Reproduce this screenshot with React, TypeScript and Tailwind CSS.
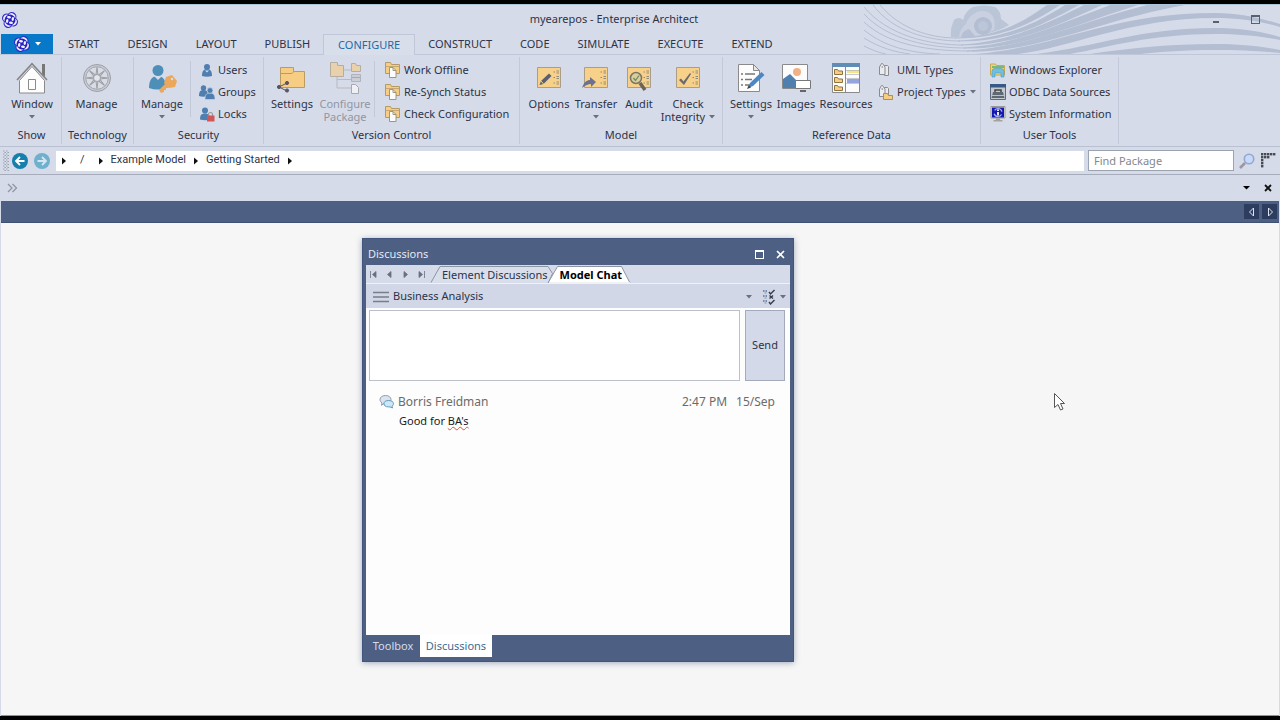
import React from "react";
import { clsx } from "clsx";

type IconProps = { className?: string };

const GOLD = "#f6cd82";
const GREY = "#8a8a8a";

/* ---------- Icons ---------- */

const LogoIcon = ({ className }: IconProps) => (
    <svg viewBox="0 0 18 18" className={clsx("h-[18px] w-[18px]", className)}>
        <g transform="rotate(28 9 9)">
            <g fill="#2f26c8">
                <circle cx="9" cy="5.200" r="4.600" />
                <circle cx="12.800" cy="9" r="4.600" />
                <circle cx="9" cy="12.800" r="4.600" />
                <circle cx="5.200" cy="9" r="4.600" />
            </g>
            <g fill="#e9ebff">
                <circle cx="9" cy="5.500" r="3.700" />
                <circle cx="12.500" cy="9" r="3.700" />
                <circle cx="9" cy="12.500" r="3.700" />
                <circle cx="5.500" cy="9" r="3.700" />
            </g>
            <circle cx="9" cy="9" r="5.400" fill="#2a20c0" />
            <g fill="#f1f2ff">
                <ellipse cx="6.800" cy="7" rx="2" ry="1.200" transform="rotate(-20 6.800 7)" />
                <ellipse cx="11" cy="6.800" rx="2" ry="1.200" transform="rotate(70 11 6.800)" />
                <ellipse cx="11.200" cy="11" rx="2" ry="1.200" transform="rotate(-20 11.200 11)" />
                <ellipse cx="7" cy="11.200" rx="2" ry="1.200" transform="rotate(70 7 11.200)" />
            </g>
        </g>
    </svg>
);

const Caret = ({ className }: IconProps) => (
    <svg viewBox="0 0 6 4" preserveAspectRatio="none" className={clsx("h-1 shrink-0", className ?? "w-1.5")}>
        <path d="M0 0h6L3 3.500z" fill="currentColor" />
    </svg>
);

const GreyCaret = ({ className }: IconProps) => <Caret className={clsx("w-1.5 text-[#6b7080]", className)} />;

const Big = ({ children }: { children: React.ReactNode }) => (
    <svg viewBox="0 0 32 32" className="h-8 w-8 shrink-0">
        {children}
    </svg>
);

const Small = ({ children }: { children: React.ReactNode }) => (
    <svg viewBox="0 0 16 16" className="h-4 w-4 shrink-0">
        {children}
    </svg>
);

const HouseIcon = () => (
    <Big>
        <path d="M26 2h3v13l-3-3z" fill="#777" />
        <path d="M3.500 18.500L16 4.500l12.500 14V31h-25z" fill="#fdfdfd" stroke={GREY} />
        <path d="M1 18L16 1.800 31 18" fill="none" stroke="#858585" strokeWidth="1.600" />
        <path d="M12.500 17.500h7v10h-7z" fill="none" stroke={GREY} />
    </Big>
);

const WheelIcon = () => (
    <Big>
        <circle cx="16" cy="16" r="13.500" fill="#c9ccd4" stroke="#9b9ea6" />
        <circle cx="16" cy="16" r="11.300" fill="#d9dce4" stroke="#a2a5ad" />
        {[0, 45, 90, 135, 180, 225, 270, 315].map((a) => (
            <path key={a} d="M15 13L16 5.500 17 13z" fill="none" stroke="#9c9fa6" transform={`rotate(${a} 16 16)`} />
        ))}
        <circle cx="16" cy="16" r="3.500" fill="#e4e6ec" stroke="#9c9fa6" />
    </Big>
);

const UserKeyIcon = () => (
    <Big>
        <path d="M3 26c0-8 3-12 8.500-12S20 18 20 26q-8.500 3-17 0z" fill="#4d8fb8" />
        <path d="M8 14l4 4 4-4z" fill="#d6dbe9" />
        <circle cx="12" cy="8.500" r="5.500" fill="#4d8fb8" />
        <g fill="#eba85a">
            <path d="M20 15l6-2 5 6-2 6-6 1-5-5z" />
            <path d="M21 20l-8 8 2 3 3-1v-2h2v-2h2l3-3z" />
        </g>
        <circle cx="26" cy="17" r="1.300" fill="#d6dbe9" />
    </Big>
);

const FolderShareIcon = () => (
    <Big>
        <path d="M4.500 25.500v-20h13v4h11v16z" fill={GOLD} stroke="#b99b66" />
        <path d="M5 11.500h11l2-2" fill="none" stroke="#b99b66" />
        <g fill="#5a5560" stroke="#5a5560">
            <path d="M3 25l8-4M3 25l8 4" />
            <circle cx="3" cy="25" r="1.600" />
            <circle cx="11" cy="21" r="1.600" />
            <circle cx="11" cy="28.500" r="1.600" />
        </g>
    </Big>
);

const ConfigPackageIcon = () => (
    <Big>
        <g opacity="0.6">
            <path d="M8 15v11h14M15 8h8M8 17.500h14" fill="none" stroke="#a5a5a5" />
            <path d="M1.500 14.500v-14h7v3h6v11zM22.500 9.500v-8h4l1 2h4v6z" fill={GOLD} stroke="#a09070" />
            <path d="M22.500 12.500h9v7h-9z" fill="#c4c7cf" stroke="#999" />
            <path d="M23 15.500h8" stroke="#888" />
            <path d="M22.500 22.500h4l3 3v6h-7z" fill="#fff" stroke="#888" />
        </g>
    </Big>
);

// Shared yellow panel of the "Model" group; the child draws the tool on top
const ModelIcon = ({ children }: { children: React.ReactNode }) => (
    <Big>
        <g transform="translate(0 -2)">
            <path d="M4.500 7.500h23v20h-23z" fill="#f7d08a" stroke="#ab9d86" />
            {[12, 17.5, 23].map((y) => (
                <path key={y} d={`M20.500 ${y}h1.500M23.500 ${y - 1}h2.500M23.500 ${y + 1}h2.500`} stroke="#8f897c" strokeWidth="1.200" />
            ))}
            {children}
        </g>
    </Big>
);

const OptionsIcon = () => (
    <ModelIcon>
        <path d="M6.500 25l1.500-4L16 13.500l2.500 2.500-8 8z" fill="#5b5f70" />
        <path d="M8 21l2.500 3" stroke="#f7d08a" />
    </ModelIcon>
);

const TransferIcon = () => (
    <ModelIcon>
        <path d="M2 28c2-6 5-8 8-8v-3l6 5-5 5v-3c-3 0-5 1-9 4z" fill="#6b7190" />
    </ModelIcon>
);

const AuditIcon = () => (
    <ModelIcon>
        <path d="M17 23l5 7" stroke="#6b6258" strokeWidth="3.500" />
        <circle cx="13" cy="18" r="5.500" fill="#d9cf9d" stroke="#7b7466" strokeWidth="1.500" />
        <path d="M10.500 18l2 2.500 3.500-5" fill="none" stroke="#6f8a5a" strokeWidth="1.300" />
    </ModelIcon>
);

const IntegrityIcon = () => (
    <ModelIcon>
        <path d="M7 20l2-1.500 2.500 3L18 13l1 1-7 11z" fill="#6b6a70" />
    </ModelIcon>
);

const DocPencilIcon = () => (
    <Big>
        <g transform="translate(0 -2)">
            <path d="M3.500 4.500h15l6 6v21h-21z" fill="#fcfcfd" stroke={GREY} />
            <path d="M18.500 4.500v6h6z" fill="#e6e6e6" stroke={GREY} />
            <path d="M6 14h2M6 19.500h2M6 25h2M10 14h10M10 19.500h7M10 25h5" stroke="#777" strokeWidth="1.500" />
            <path d="M13 28l2-5L26.500 12l3 3L18 26z" fill="#4a87c4" />
            <path d="M12 29l1.800-4 2.200 2.400z" fill="#444" />
        </g>
    </Big>
);

const ImagesIcon = () => (
    <Big>
        <g transform="translate(0 -2)">
            <path d="M2.500 4.500h25v24h-25z" fill="#fcfcfd" stroke={GREY} />
            <circle cx="17" cy="12" r="4" fill="#f0b184" />
            <path d="M3 28V19l7-5 8 8v6z" fill="#4f7fae" />
            <path d="M15.500 20.500h15v8h-15z" fill="#fff" stroke="#777" />
            <path d="M20 30h6v2h-6z" fill="#666" />
        </g>
    </Big>
);

const ResourcesIcon = () => (
    <Big>
        <path d="M2.500 1.500h27v29h-27z" fill="#fcfcfd" stroke={GREY} />
        <path d="M2 1h28v4H2z" fill="#5f8db5" />
        <path d="M15.500 5v25" stroke={GREY} />
        {[7, 15, 23].map((y) => (
            <path key={y} d={`M4.500 ${y + 5}.500v-5h3l1 1.500h4v3.500z`} fill={GOLD} stroke="#8f7442" />
        ))}
        <path d="M17 8h12v3H17z" fill="#f3e58a" />
        <path d="M17 17h12v4H17z" fill="#94a5dd" />
        <path d="M16 8.500h13M16 12.500h13M16 16.500h13M16 21.500h13" stroke="#b0b3ba" strokeWidth="0.700" />
    </Big>
);

const UserIcon = () => (
    <Small>
        <path d="M3 14c0-4 1-7 5-7s5 3 5 7q-5 1.500-10 0z" fill="#4f7fb0" />
        <path d="M6 8.500l2 2 2-2z" fill="#d6dbe9" />
        <circle cx="8" cy="5" r="3" fill="#4f7fb0" />
    </Small>
);

const GroupsIcon = () => (
    <Small>
        <path d="M0 12c0-4 1-6 4.500-6S9 8 9 12q-5 1.500-9 0z" fill="#4f7fb0" />
        <circle cx="4.500" cy="4" r="2.700" fill="#4f7fb0" />
        <path d="M6 15.500c0-4 1-6.500 5-6.500s5 2.500 5 6.500z" fill="#4f7fb0" stroke="#d6dbe9" strokeWidth="0.600" />
        <circle cx="11" cy="6.500" r="2.900" fill="#4f7fb0" stroke="#d6dbe9" strokeWidth="0.600" />
    </Small>
);

const LocksIcon = () => (
    <Small>
        <path d="M1 13.500c0-4 1-6 5-6s5 2 5 6q-5 1.500-10 0z" fill="#4f7fb0" />
        <circle cx="6" cy="4.500" r="3" fill="#4f7fb0" />
        <path d="M9.500 10V8.500a2 2 0 014 0V10" fill="none" stroke="#999" strokeWidth="1.200" />
        <path d="M8 9.500h7.500v6H8z" fill="#d2555a" />
    </Small>
);

const FolderDocIcon = () => (
    <Small>
        <path d="M0.500 11.500v-11h5l1 2h8v9z" fill={GOLD} stroke="#b39a68" />
        <path d="M1 4.500h13" stroke="#b39a68" strokeWidth="0.700" />
        <path d="M4.500 5.500h3.500l3 3v7H4.500z" fill="#fdfdfb" stroke="#958c78" strokeWidth="0.900" />
        <path d="M8 5.500v3h3" fill="none" stroke="#958c78" strokeWidth="0.900" />
    </Small>
);

const TagsIcon = ({ locked }: { locked?: boolean }) => (
    <Small>
        <path d="M6.500 3.500h3l1 1v9h-4z" fill="#e8ebf3" stroke="#8b8b8b" />
        <path d="M1.500 5l2-3.500h1L7 5v7.500H1.500z" fill="#e8ebf3" stroke="#8b8b8b" />
        <circle cx="4.200" cy="5" r="0.700" fill="#777" />
        {locked && <path d="M5.500 15.500v-6h4l1 2h4v4z" fill={GOLD} stroke="#a8905f" />}
    </Small>
);

const ExplorerIcon = () => (
    <Small>
        <path d="M0.500 13V2h5l1 1.500h8V13z" fill="#f0d57a" stroke="#c7a850" />
        <path d="M2 5h12" stroke="#7ab873" strokeWidth="2" />
        <path d="M2 15V9.500a3 3 0 013-3h6a3 3 0 013 3V15h-3v-4H5v4z" fill="#6fbfe0" stroke="#4b9cc4" strokeWidth="0.600" />
    </Small>
);

const OdbcIcon = () => (
    <Small>
        <path d="M0.500 0.500h15v15h-15z" fill="#c3c8cf" stroke="#5d6b7c" />
        <path d="M0 0h16v3.500H0z" fill="#365a86" />
        <path d="M5 8V6h6v2" fill="none" stroke="#444" strokeWidth="1.500" />
        <path d="M1.500 14l1.500-6h10l1.500 6z" fill="#5e6a73" />
        <path d="M2 11.500h12" stroke="#b9c0c6" />
    </Small>
);

const SysInfoIcon = () => (
    <Small>
        <path d="M1 0.500h14v11.500H1z" fill="#e5e5e0" stroke="#999" />
        <path d="M2 1.500h12v10H2z" fill="#1519b0" />
        <circle cx="8" cy="6.500" r="4" fill="none" stroke="#a9b4f5" strokeWidth="1.200" strokeDasharray="9 3.500" strokeDashoffset="-2" />
        <path d="M8 3.500v1.500M8 6v3.500" stroke="#fff" strokeWidth="1.800" />
        <path d="M6 12.500h4v1.500h2.500v1.500h-9V14H6z" fill="#a4a49c" />
    </Small>
);

const ChatIcon = () => (
    <svg viewBox="0 0 16 16" className="h-4 w-4 shrink-0">
        <path d="M6.500 1.500c3.200 0 5.500 1.600 5.500 4s-2.300 4-5.500 4H5l-2.500 1.800.5-2.500C1.600 8 1 6.900 1 5.500c0-2.400 2.300-4 5.500-4z" fill="#dbe4ee" stroke="#8f9cab" />
        <path d="M9.500 6.500c2.900 0 5 1.200 5 3.200 0 1-.5 1.800-1.500 2.400l.5 1.900-2.500-1.100H9.500c-2.900 0-4.500-1.200-4.500-3.200s1.600-3.200 4.500-3.200z" fill="#cfe6f5" stroke="#5d9cc4" />
    </svg>
);

const ChecklistIcon = () => (
    <svg viewBox="0 0 14 16" className="h-4 w-3.5">
        <path d="M1 2h5M1 7h5M1 12h5" stroke="#55749c" strokeWidth="1.500" strokeDasharray="1.500 1" />
        <path d="M2.500 4h2M2.500 9h2M2.500 14h2" stroke="#8a94a8" />
        <path d="M7 3l1.500 2L12.500 1M7 13l1.500 2 4-4M7.500 6.500l3.500 3M11 6.500l-3.500 3" fill="none" stroke="#333a48" strokeWidth="1.400" />
    </svg>
);

/* Decorative waves behind the right end of the title bar */
const TitleWaves = () => (
    <svg viewBox="860 5 420 49" className="pointer-events-none absolute top-0 right-0 h-[49px] w-[420px]">
        <path d="M951 37q-1-9 3-17 5-4 9 0 2-9 10-13 12-3 22 0 6 4 6 12l8 6q-22 13-58 12z" fill="#bac5d8" />
        <path d="M959 37q1-9 7-13 2-8 11-12 9-3 15 3 4 6 2 15-14 8-35 7z" fill="#c9d1e0" />
        <circle cx="983" cy="26" r="9" fill="#b3bed2" />
        <circle cx="983" cy="26" r="5" fill="#bcc6d8" />
        <path d="M961 37q1-6 8-8l7 8z" fill="#b5c0d4" />
        <g fill="none" stroke="#b4bfd2" strokeWidth="1">
            <path d="M880 5C900 29 930 38 956 38" />
            <path d="M873 5C893 32 930 41 960 41" />
            <path d="M864 7C888 36 930 45 963 45" />
            <path d="M864 14C888 40 930 48 966 48" />
            <path d="M864 22C888 45 930 51 969 51" />
            <path d="M864 30C885 47 910 53 940 54" />
            <path d="M864 38C880 48 895 52 910 54" />
            <path d="M864 46C872 50 880 53 886 54" />
        </g>
        <g fill="#b3bed2">
            <path d="M955 37.500C1000 37 1024 21 1047 5h13C1030 24 1004 38.500 955 38.500z" />
            <path d="M958 40.500C1006 39 1038 22 1065 5h14C1042 25 1012 41.500 958 41.500z" />
            <path d="M961 44.500C1010 42 1048 23 1084 5h18C1056 26 1014 46 961 45.500z" />
            <path d="M964 47.500C1014 45 1060 24 1110 5h28C1074 25 1020 50 964 48.500z" />
            <path d="M967 50.500C1024 48 1080 22 1147 5h38C1100 20 1034 54 967 51.500z" />
            <path d="M975 54C1060 47 1110 13 1215 13c25 0 45 5 65 11v3c-20-6-40-9-65-9C1130 18 1070 48 1018 54z" />
            <path d="M1036 54C1100 46 1140 28 1215 28c25 0 45 3 65 9v3c-20-4-40-6-65-6C1150 34 1110 47 1070 54z" />
            <path d="M1090 54C1130 48 1170 44 1215 44c25 0 45 2 65 6v3c-20-2-40-3-65-3-30 0-55 2-75 4z" />
        </g>
    </svg>
);

/* ---------- Ribbon ---------- */

const TABS = ["START", "DESIGN", "LAYOUT", "PUBLISH", "CONFIGURE", "CONSTRUCT", "CODE", "SIMULATE", "EXECUTE", "EXTEND"];

interface RibbonGroupProps {
    title: string;
    className: string;
    children: React.ReactNode;
}

const RibbonGroup = ({ title, className, children }: RibbonGroupProps) => (
    <section className={clsx("my-0.5 flex shrink-0 flex-col border-r border-[#c3c9d9]", className)}>
        <div className="flex h-[70px] items-start">{children}</div>
        <h2 className="text-center leading-4">{title}</h2>
    </section>
);

interface BigButtonProps {
    icon: React.ReactNode;
    label: string;
    second?: string;
    menu?: boolean;
    disabled?: boolean;
    className: string;
}

const BigButton = ({ icon, label, second, menu, disabled, className }: BigButtonProps) => (
    <button
        type="button"
        disabled={disabled}
        className={clsx(
            "flex shrink-0 flex-col items-center pt-[5px] leading-[13px] whitespace-nowrap",
            disabled && "text-[#9196a3]",
            className,
        )}
    >
        {icon}
        <span className="mt-[3px]">{label}</span>
        {second && (
            <span className="flex items-center gap-1">
                {second}
                {menu && <GreyCaret />}
            </span>
        )}
        {menu && !second && <GreyCaret className="mt-[5px]" />}
    </button>
);

interface SmallButtonProps {
    icon: React.ReactNode;
    label: string;
    menu?: boolean;
}

const SmallButton = ({ icon, label, menu }: SmallButtonProps) => (
    <button type="button" className="flex h-[22px] items-center gap-[3px] whitespace-nowrap">
        {icon}
        <span>{label}</span>
        {menu && <GreyCaret className="ml-px" />}
    </button>
);

const Divider = () => <div className="mt-1 h-14 w-px bg-[#c3c9d9]" />;

const Ribbon = () => (
    <div className="flex h-[92px] shrink-0 overflow-hidden border-b border-[#b9c0d1] pl-0.5">
        <RibbonGroup title="Show" className="w-[60px]">
            <BigButton icon={<HouseIcon />} label="Window" menu className="w-[60px]" />
        </RibbonGroup>
        <RibbonGroup title="Technology" className="w-[72px]">
            <BigButton icon={<WheelIcon />} label="Manage" className="w-[69px]" />
        </RibbonGroup>
        <RibbonGroup title="Security" className="w-[130px]">
            <BigButton icon={<UserKeyIcon />} label="Manage" menu className="w-[56px]" />
            <Divider />
            <div className="ml-2 flex flex-col pt-0.5">
                <SmallButton icon={<UserIcon />} label="Users" />
                <SmallButton icon={<GroupsIcon />} label="Groups" />
                <SmallButton icon={<LocksIcon />} label="Locks" />
            </div>
        </RibbonGroup>
        <RibbonGroup title="Version Control" className="w-[256px]">
            <BigButton icon={<FolderShareIcon />} label="Settings" className="ml-1 w-12" />
            <BigButton icon={<ConfigPackageIcon />} label="Configure" second="Package" disabled className="w-[58px]" />
            <Divider />
            <div className="ml-2.5 flex flex-col pt-0.5">
                <SmallButton icon={<FolderDocIcon />} label="Work Offline" />
                <SmallButton icon={<FolderDocIcon />} label="Re-Synch Status" />
                <SmallButton icon={<FolderDocIcon />} label="Check Configuration" />
            </div>
        </RibbonGroup>
        <RibbonGroup title="Model" className="w-[203px]">
            <BigButton icon={<OptionsIcon />} label="Options" className="ml-[5px] w-12" />
            <BigButton icon={<TransferIcon />} label="Transfer" menu className="w-[46px]" />
            <BigButton icon={<AuditIcon />} label="Audit" className="w-10" />
            <BigButton icon={<IntegrityIcon />} label="Check" second="Integrity" menu className="w-[58px]" />
        </RibbonGroup>
        <RibbonGroup title="Reference Data" className="w-[258px]">
            <BigButton icon={<DocPencilIcon />} label="Settings" menu className="ml-1 w-12" />
            <BigButton icon={<ImagesIcon />} label="Images" className="w-[42px]" />
            <BigButton icon={<ResourcesIcon />} label="Resources" className="w-[58px]" />
            <div className="ml-[3px] flex flex-col pt-0.5">
                <SmallButton icon={<TagsIcon />} label="UML Types" />
                <SmallButton icon={<TagsIcon locked />} label="Project Types" menu />
            </div>
        </RibbonGroup>
        <RibbonGroup title="User Tools" className="w-[138px]">
            <div className="ml-[9px] flex flex-col pt-0.5">
                <SmallButton icon={<ExplorerIcon />} label="Windows Explorer" />
                <SmallButton icon={<OdbcIcon />} label="ODBC Data Sources" />
                <SmallButton icon={<SysInfoIcon />} label="System Information" />
            </div>
        </RibbonGroup>
    </div>
);

const Header = () => (
    <header className="relative flex shrink-0 flex-col border-t border-[#a9c6dd]">
        <TitleWaves />
        <div className="relative flex h-[29px] items-center px-px">
            <LogoIcon />
            <h1 className="flex-1 pr-[70px] text-center">myearepos - Enterprise Architect</h1>
            <div className="absolute right-[17px] flex items-center gap-[23px]">
                <button type="button" aria-label="Minimise" className="flex h-4 w-4 items-center justify-center">
                    <span className="mt-1 h-0.5 w-1.5 bg-[#5b6070]" />
                </button>
                <button type="button" aria-label="Maximise" className="flex h-4 w-4 items-center justify-center">
                    <span className="h-[9px] w-[9px] border border-t-2 border-[#5b6070]" />
                </button>
            </div>
        </div>
        <nav className="relative flex h-[21px] items-stretch border-b border-[#c0c7d8]">
            <button
                type="button"
                aria-label="Application menu"
                className="mr-px ml-px flex w-[52px] items-center justify-center gap-1 bg-[#0878c8] text-white"
            >
                <LogoIcon className="h-4 w-4" />
                <Caret />
            </button>
            {TABS.map((tab) => (
                <button
                    key={tab}
                    type="button"
                    className={clsx(
                        "px-3.5",
                        tab === "CONFIGURE" && "-mx-px -mb-px border border-b-0 border-[#c0c7d8] bg-[#d9deeb] text-[#1f6aa5]",
                    )}
                >
                    {tab}
                </button>
            ))}
        </nav>
    </header>
);

/* ---------- Navigation bar ---------- */

const Crumb = () => (
    <svg viewBox="0 0 4 8" className="h-2 w-1 shrink-0">
        <path d="M0 0.500L4 4 0 7.500z" fill="#111" />
    </svg>
);

const RoundArrow = ({ label, back }: { label: string; back?: boolean }) => (
    <button type="button" aria-label={label}>
        <svg viewBox="0 0 16 16" className="h-4 w-4">
            <circle cx="8" cy="8" r="8" fill={back ? "#167fab" : "#6fb0cf"} />
            <path
                d={back ? "M12.500 8H4.500M8 4L4 8l4 4" : "M3.500 8h8M8 4l4 4-4 4"}
                fill="none"
                stroke={back ? "#fff" : "#d5e6f0"}
                strokeWidth="1.800"
            />
        </svg>
    </button>
);

const NavigationBar = () => (
    <div className="flex h-7 shrink-0 items-center border-b border-[#a6acba] pr-[3px] pl-[3px]">
        <svg viewBox="0 0 6 22" className="mr-[3px] h-[22px] w-1.5">
            {[1, 4, 7, 10, 13, 16, 19].map((y) => (
                <path key={y} d={`M0 ${y}h1.500M3 ${y}h1.500M1.500 ${y + 1.5}h1.500M4.500 ${y + 1.5}h1.500`} stroke="#9ba2b3" />
            ))}
        </svg>
        <div className="flex gap-1.5">
            <RoundArrow label="Back" back />
            <RoundArrow label="Forward" />
        </div>
        <div className="ml-1.5 flex h-5 flex-1 items-center bg-white px-1.5 font-['Roboto','Liberation_Sans',sans-serif]">
            <Crumb />
            <a href="#root" className="mx-3.5">/</a>
            <Crumb />
            <a href="#example-model" className="mx-2">Example Model</a>
            <Crumb />
            <a href="#getting-started" className="mx-2">Getting Started</a>
            <Crumb />
        </div>
        <input
            type="text"
            aria-label="Find Package"
            placeholder="Find Package"
            className="ml-1 h-[21px] w-[146px] border border-[#9ba2b0] bg-white px-[5px] outline-none placeholder:text-[#85878c]"
        />
        <button type="button" aria-label="Search" className="ml-[5px]">
            <svg viewBox="0 0 16 16" className="h-4 w-4">
                <path d="M1 15l5-5" stroke="#9a97a3" strokeWidth="2.600" />
                <circle cx="10" cy="6" r="4.700" fill="#c6dafa" stroke="#98a5d0" strokeWidth="1.600" />
            </svg>
        </button>
        <svg viewBox="0 0 16 16" className="ml-1.5 h-4 w-4">
            {["0 0", "3 0", "6 0", "9 0", "12 0", "0 3", "3 3", "6 3", "0 6", "0 9", "0 12"].map((p) => (
                <rect key={p} width="2.400" height="2.400" transform={`translate(${p})`} fill="#484b54" />
            ))}
        </svg>
    </div>
);

/* ---------- Discussions window ---------- */

const TAB_ARROWS = [
    { label: "First tab", d: "M1.500 1v7M7 1.500L3.500 4.500 7 7.500z" },
    { label: "Previous tab", d: "M6 1.500L2.500 4.500 6 7.500z" },
    { label: "Next tab", d: "M3 1.500L6.500 4.500 3 7.500z" },
    { label: "Last tab", d: "M7.500 1v7M2 1.500L5.500 4.500 2 7.500z" },
];

const DiscussionsWindow = () => (
    <section className="absolute top-[15px] left-[361px] flex h-[424px] w-[432px] flex-col border border-[#41557d] bg-[#4d5f82] px-[3px] shadow-[0_1px_6px_rgba(60,80,120,0.45)]">
        <div className="flex h-[26px] items-center pt-1 pr-[5px] pl-0.5 text-[#e4e9f3]">
            <h2 className="flex-1">Discussions</h2>
            <button type="button" aria-label="Maximise" className="mr-3">
                <span className="block h-[9px] w-[9px] border border-t-2 border-white" />
            </button>
            <button type="button" aria-label="Close">
                <svg viewBox="0 0 9 9" className="h-[9px] w-[9px]">
                    <path d="M1 1l7 7M8 1L1 8" stroke="#fff" strokeWidth="1.700" />
                </svg>
            </button>
        </div>

        <div className="relative flex h-[19px] items-center border-b border-[#eef1f7] bg-[#d6dbe9] pl-[3px]">
            <div className="flex gap-[7px]">
                {TAB_ARROWS.map((arrow) => (
                    <button key={arrow.label} type="button" aria-label={arrow.label}>
                        <svg viewBox="0 0 9 9" className="h-[9px] w-[9px]">
                            <path d={arrow.d} fill="#6a7080" stroke="#6a7080" strokeWidth="0.800" />
                        </svg>
                    </button>
                ))}
            </div>
            <div className="relative ml-1 flex h-full items-center">
                <svg viewBox="0 0 204 17" className="absolute bottom-0 left-0 h-[17px] w-[204px]">
                    <path d="M1 16.500L10 0.500h108l4.500 7-4 9" fill="#d9deeb" stroke="#8e94a3" />
                    <path d="M118 17L127.500 0.500H191.500L200 17z" fill="#fff" stroke="#8e94a3" />
                    <path d="M119 17h81" stroke="#fff" strokeWidth="1.500" />
                </svg>
                <button type="button" className="relative ml-3 pt-0.5">Element Discussions</button>
                <button type="button" className="relative ml-3 pt-0.5 font-bold text-black">Model Chat</button>
            </div>
        </div>

        <div className="flex h-6 items-center bg-[#d1d7e6] pt-px pr-1 pl-[7px]">
            <svg viewBox="0 0 16 12" className="mr-1 h-3 w-4">
                <path d="M0 1.500h16M0 6h16M0 10.500h16" stroke="#7a7e88" strokeWidth="1.600" />
            </svg>
            <span className="flex-1">Business Analysis</span>
            <button type="button" aria-label="Choose topic" className="p-1">
                <GreyCaret />
            </button>
            <button type="button" aria-label="Discussion options" className="ml-1.5 flex items-center gap-1">
                <ChecklistIcon />
                <GreyCaret />
            </button>
        </div>

        <div className="flex flex-1 flex-col bg-[#fdfdfd] px-[3px] pt-0.5">
            <div className="flex h-[71px] gap-[5px] pr-0.5">
                <textarea aria-label="Message" className="h-full flex-1 resize-none border border-[#bcc0ca] bg-white outline-none" />
                <button type="button" className="w-10 border border-[#a3aabc] bg-[#d3d9e8]">
                    Send
                </button>
            </div>
            <ul>
                <li className="pt-3 pr-3 pl-2.5">
                    <div className="flex items-center gap-[3px] text-xs leading-[18px] text-[#6b6b6b]">
                        <ChatIcon />
                        <span className="flex-1">Borris Freidman</span>
                        <time className="mr-1.5">2:47 PM</time>
                        <time>15/Sep</time>
                    </div>
                    <p className="mt-px pl-5 leading-[18px] text-[#1a1a1a]">
                        Good for{" "}
                        <span className="underline decoration-[#d9534f] decoration-wavy decoration-1 underline-offset-1">BA's</span>
                    </p>
                </li>
            </ul>
        </div>

        <div className="flex h-[26px] items-start text-[#d5dcea]">
            <button type="button" className="h-[22px] w-[54px]">Toolbox</button>
            <button type="button" className="h-[22px] w-[72px] bg-white text-[#3d6a94]">Discussions</button>
        </div>
    </section>
);

export default function App() {
    return (
        <div className="flex h-screen flex-col overflow-hidden border-y-4 border-black bg-[#d6dbe9] font-['Noto_Sans','Open_Sans',sans-serif] text-[11px] text-[#2c3347]">
            <Header />
            <Ribbon />
            <NavigationBar />

            <div className="flex h-[26px] shrink-0 items-center pr-2 pl-[7px]">
                <button type="button" aria-label="Expand toolbox" className="mr-auto">
                    <svg viewBox="0 0 11 10" className="h-2.5 w-[11px]">
                        <path d="M1 1l4 4-4 4M5.500 1l4 4-4 4" fill="none" stroke="#9096a3" strokeWidth="1.300" />
                    </svg>
                </button>
                <button type="button" aria-label="Window list" className="mr-3.5">
                    <Caret className="w-[7px] text-black" />
                </button>
                <button type="button" aria-label="Close view">
                    <svg viewBox="0 0 8 8" className="h-2 w-2">
                        <path d="M1 1l6 6M7 1L1 7" stroke="#111" strokeWidth="1.800" />
                    </svg>
                </button>
            </div>

            <div className="mx-px flex h-[22px] shrink-0 items-center justify-end gap-[3px] border-b border-[#3f5072] bg-[#4d5f82] pr-0.5">
                {["M6.500 2L2.500 6l4 4z", "M3.500 2l4 4-4 4z"].map((d, i) => (
                    <button
                        key={d}
                        type="button"
                        aria-label={i === 0 ? "Scroll left" : "Scroll right"}
                        className="flex h-[15px] w-[15px] items-center justify-center bg-[#2c3d60]"
                    >
                        <svg viewBox="0 0 10 12" className="h-3 w-2.5">
                            <path d={d} fill="none" stroke="#dfe5f0" />
                        </svg>
                    </button>
                ))}
            </div>

            <main className="relative mx-px flex-1 border-b border-[#8d919b] bg-[#f6f6f6]">
                <DiscussionsWindow />
                <svg viewBox="0 0 14 20" className="absolute top-[169px] left-[1052px] h-5 w-3.5">
                    <path d="M1.500 1.500v14l3.500-3 2.500 5.500 2.500-1-2.500-5.500h4z" fill="#fff" stroke="#555" />
                </svg>
            </main>
        </div>
    );
}
